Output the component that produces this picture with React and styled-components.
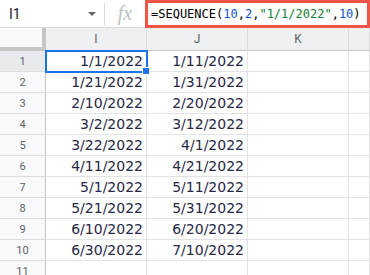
import React from 'react'
import styled, { createGlobalStyle } from 'styled-components'

const GlobalStyle = createGlobalStyle`
body{
margin:0;
background:#fff;
font-family:"Roboto","Liberation Sans",sans-serif;
}
`;

const Page = styled.div`
width:370px;
height:275px;
overflow:hidden;
background:#fff;
`;

const Toolbar = styled.div`
display:flex;
align-items:center;
height:27px;
border-bottom:1px solid #dadce0;
`;

const NameBox = styled.div`
display:flex;
align-items:center;
justify-content:space-between;
width:96px;
padding-left:9px;
box-sizing:border-box;
font-size:14px;
color:#202124;
`;

const Caret = styled.span`
width:0;
height:0;
border-left:4px solid transparent;
border-right:4px solid transparent;
border-top:4px solid #5f6368;
`;

const Divider = styled.div`
width:1px;
height:22px;
margin-left:8px;
background:#dadce0;
`;

const Fx = styled.div`
width:40px;
text-align:center;
font-family:"Liberation Serif",serif;
font-style:italic;
font-size:20px;
color:#bdc1c6;
`;

const FormulaBox = styled.div`
flex:1;
height:28px;
margin-top:1px;
box-sizing:border-box;
border:3px solid #ef5446;
display:flex;
align-items:center;
padding-left:3px;
font-family:"DejaVu Sans Mono",monospace;
font-size:12px;
color:#000;
white-space:nowrap;
`;

const Tok = styled.span`
color:${({ kind }) => kind === 'num' ? '#1155cc' : kind === 'str' ? '#188038' : '#000'};
`;

const Grid = styled.div`
display:grid;
grid-template-columns:46px 101px 101px 101px 1fr;
grid-auto-rows:21px;
grid-template-rows:23px;
`;

const Corner = styled.div`
background:#f8f9fa;
border-right:4px solid #c4c7c5;
border-bottom:4px solid #c4c7c5;
box-sizing:border-box;
`;

const ColHead = styled.div`
display:flex;
align-items:center;
justify-content:center;
background:#eef0f2;
border-right:1px solid #dadce0;
border-bottom:1px solid #c4c7c5;
box-sizing:border-box;
font-size:12px;
color:#5f6368;
`;

const RowHead = styled.div`
display:flex;
align-items:center;
justify-content:center;
background:${({ active }) => active ? '#e8eaed' : '#f8f9fa'};
border-right:1px solid #c4c7c5;
border-bottom:1px solid #dadce0;
box-sizing:border-box;
font-size:11px;
color:#5f6368;
`;

const Cell = styled.div`
position:relative;
display:flex;
align-items:center;
justify-content:flex-end;
padding-right:3px;
border-right:1px solid #e2e3e3;
border-bottom:1px solid #e2e3e3;
box-sizing:border-box;
font-family:"DejaVu Sans",sans-serif;
font-size:14px;
color:#272746;
${({ selected }) => selected && `
outline:2px solid #1a73e8;
outline-offset:-1px;
`}
`;

const Handle = styled.span`
position:absolute;
right:-4px;
bottom:-4px;
width:6px;
height:6px;
background:#1a73e8;
border:1px solid #fff;
z-index:2;
`;

const rows = [
  ['1/1/2022', '1/11/2022'],
  ['1/21/2022', '1/31/2022'],
  ['2/10/2022', '2/20/2022'],
  ['3/2/2022', '3/12/2022'],
  ['3/22/2022', '4/1/2022'],
  ['4/11/2022', '4/21/2022'],
  ['5/1/2022', '5/11/2022'],
  ['5/21/2022', '5/31/2022'],
  ['6/10/2022', '6/20/2022'],
  ['6/30/2022', '7/10/2022'],
  ['', ''],
];

function App() {
  return (
    <Page>
      <GlobalStyle />
      <Toolbar>
        <NameBox>I1<Caret /></NameBox>
        <Divider />
        <Fx>fx</Fx>
        <FormulaBox>
          =SEQUENCE(<Tok kind="num">10</Tok>,<Tok kind="num">2</Tok>,<Tok kind="str">"1/1/2022"</Tok>,<Tok kind="num">10</Tok>)
        </FormulaBox>
      </Toolbar>
      <Grid>
        <Corner />
        <ColHead>I</ColHead>
        <ColHead>J</ColHead>
        <ColHead>K</ColHead>
        <ColHead />
        {rows.map((r, i) => (
          <React.Fragment key={i}>
            <RowHead active={i === 0}>{i + 1}</RowHead>
            <Cell selected={i === 0}>{r[0]}{i === 0 && <Handle />}</Cell>
            <Cell>{r[1]}</Cell>
            <Cell />
            <Cell />
          </React.Fragment>
        ))}
      </Grid>
    </Page>
  )
}

export default App
